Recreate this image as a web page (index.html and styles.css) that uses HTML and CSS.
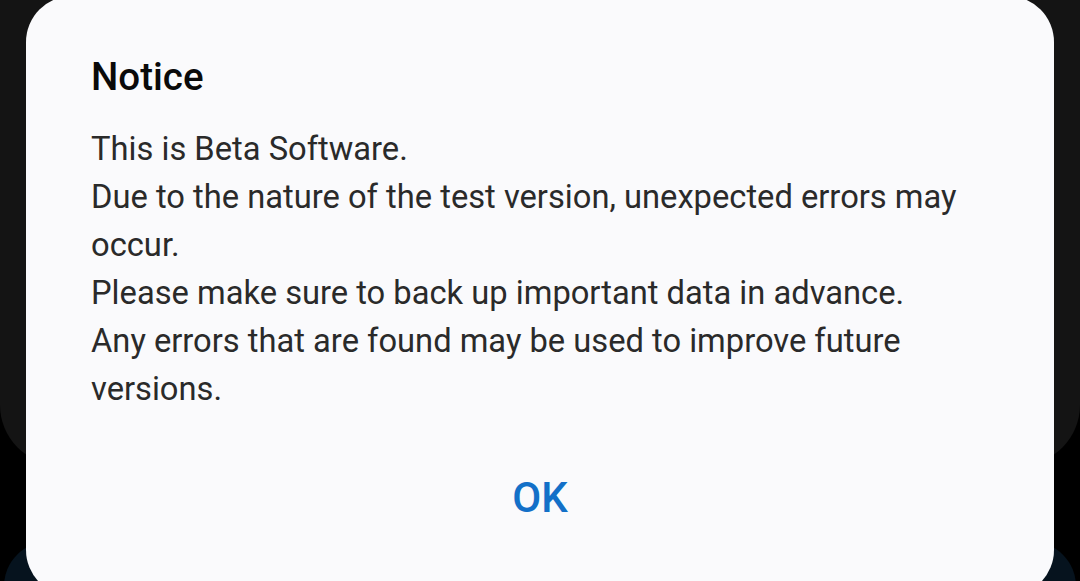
FILE: index.html
```html
<!DOCTYPE html>
<html>
<head>
<meta charset="utf-8">
<link rel="stylesheet" href="styles.css">
</head>
<body>
<div class="screen">
  <div class="bg-card"></div>
  <div class="bg-bottom"></div>
  <div class="dialog">
    <h1 class="title">Notice</h1>
    <div class="message">
      <p>This is Beta Software.</p>
      <p>Due to the nature of the test version, unexpected errors may occur.</p>
      <p>Please make sure to back up important data in advance.</p>
      <p>Any errors that are found may be used to improve future versions.</p>
    </div>
    <div class="actions"><button class="btn">OK</button></div>
  </div>
</div>
</body>
</html>
```

FILE: styles.css
```css
html, body {
  margin: 0;
  padding: 0;
  background: #000;
}
.screen {
  position: relative;
  width: 1080px;
  height: 581px;
  overflow: hidden;
  background: #000;
  font-family: Roboto, "Noto Sans", sans-serif;
}
.bg-card {
  height: 465px;
  background: #141414;
  border-radius: 0 0 60px 60px;
}
.bg-bottom {
  height: 80px;
  margin: 77px 4px 0 4px;
  background: #06131e;
  border-radius: 44px 44px 0 0;
}
.dialog {
  position: absolute;
  left: 26px;
  top: -4px;
  width: 1028px;
  height: 600px;
  box-sizing: border-box;
  background: #fafafc;
  border-radius: 46px;
  padding: 0 65px 0 65px;
  display: flex;
  flex-direction: column;
}
.title {
  margin: 57px 0 0 0;
  font-size: 38.5px;
  line-height: 48px;
  font-weight: 500;
  color: #0a0a0a;
}
.message {
  margin-top: 24px;
  font-size: 32.7px;
  line-height: 48px;
  color: #2a2a2a;
}
.message p {
  margin: 0;
}
.actions {
  display: flex;
  justify-content: center;
  margin-top: 60px;
}
.btn {
  border: 0;
  background: none;
  padding: 0;
  font-family: inherit;
  font-size: 42px;
  font-weight: 500;
  line-height: 50px;
  color: #1370c8;
}
```
